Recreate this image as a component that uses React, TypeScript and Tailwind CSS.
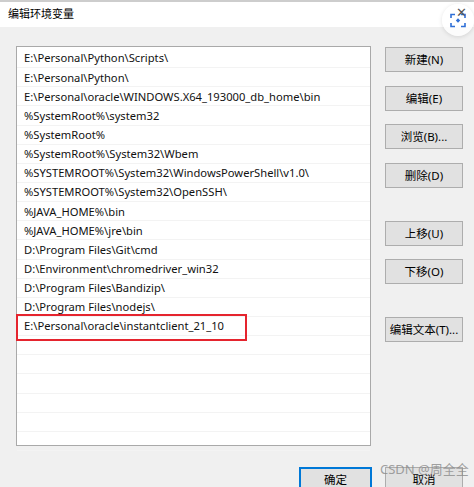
const paths = [
  "E:\\Personal\\Python\\Scripts\\",
  "E:\\Personal\\Python\\",
  "E:\\Personal\\oracle\\WINDOWS.X64_193000_db_home\\bin",
  "%SystemRoot%\\system32",
  "%SystemRoot%",
  "%SystemRoot%\\System32\\Wbem",
  "%SYSTEMROOT%\\System32\\WindowsPowerShell\\v1.0\\",
  "%SYSTEMROOT%\\System32\\OpenSSH\\",
  "%JAVA_HOME%\\bin",
  "%JAVA_HOME%\\jre\\bin",
  "D:\\Program Files\\Git\\cmd",
  "D:\\Environment\\chromedriver_win32",
  "D:\\Program Files\\Bandizip\\",
  "D:\\Program Files\\nodejs\\",
  "E:\\Personal\\oracle\\instantclient_21_10",
];

// empty rows to fill the rest of the list
const blanks = Array.from({ length: 6 });

function Btn({ label, className = "" }: { label: string; className?: string }) {
  return (
    <button
      className={
        "h-[25px] w-[78px] border border-[#adadad] bg-[#e1e1e1] text-[11.5px] text-black " +
        className
      }
    >
      {label}
    </button>
  );
}

export default function App() {
  return (
    <div
      className="relative h-[487px] w-[474px] overflow-hidden bg-[#f0f0f0] text-black"
      style={{ fontFamily: '"Noto Sans", "Noto Sans CJK SC", sans-serif' }}
    >
      <div className="h-[2px] bg-[#cdcdcd]" />
      {/* title bar */}
      <div className="flex h-[25px] items-center bg-white pl-[8px] text-[11px]">
        编辑环境变量
      </div>

      <div className="flex pl-[16px] pt-[19px]">
        {/* path list */}
        <div className="relative h-[400px] w-[355px] border border-[#a9a9a9] bg-white pt-[2px]">
          {paths.map((p) => (
            <div
              key={p}
              className="flex h-[19.15px] items-center border-b border-[#f3f3f3] pl-[7px] text-[11.2px] leading-none text-[#111]"
            >
              {p}
            </div>
          ))}
          {blanks.map((_, i) => (
            <div key={i} className="h-[19.15px] border-b border-[#f3f3f3]" />
          ))}
          {/* highlight around the new entry */}
          <div className="absolute left-[-1px] top-[267px] h-[27px] w-[231px] border-2 border-[#e5242e]" />
        </div>

        {/* action buttons */}
        <div className="ml-[14px] flex flex-col pt-[1px]">
          <Btn label="新建(N)" />
          <Btn label="编辑(E)" className="mt-[14px]" />
          <Btn label="浏览(B)..." className="mt-[13px]" />
          <Btn label="删除(D)" className="mt-[14px]" />
          <Btn label="上移(U)" className="mt-[33px]" />
          <Btn label="下移(O)" className="mt-[13px]" />
          <Btn label="编辑文本(T)..." className="mt-[33px]" />
        </div>
      </div>

      {/* dialog footer */}
      <div className="flex pl-[299px] pt-[21px]">
        <button className="h-[25px] w-[73px] border-2 border-[#0078d7] bg-[#e1e1e1] text-[11.5px]">
          确定
        </button>
        <Btn label="取消" className="ml-[13px]" />
      </div>

      <div className="pointer-events-none absolute left-[380px] top-[463px] whitespace-nowrap text-[13px] leading-none text-[#8a8a8a]/80">
        CSDN @周全全
      </div>

      {/* floating capture button over the close button */}
      <div className="absolute left-[442px] top-[4px] flex h-[32px] w-[32px] items-center justify-center rounded-full bg-white/80 shadow-[0_1px_4px_rgba(0,0,0,0.12)]">
        <svg width="16" height="15" viewBox="0 0 16 15" fill="none" stroke="#2f6fd6" strokeWidth="1.6">
          <path d="M1 5V1.5h4M11 1.5h4V5M15 10v3.5h-4M5 13.5H1V10" />
          <path d="M8 5.3 10.2 7.5 8 9.7 5.8 7.5Z" fill="#2f6fd6" stroke="none" />
        </svg>
      </div>
      <div className="absolute right-[7px] top-[6px] text-[13px] leading-none text-[#555]">✕</div>
    </div>
  );
}
